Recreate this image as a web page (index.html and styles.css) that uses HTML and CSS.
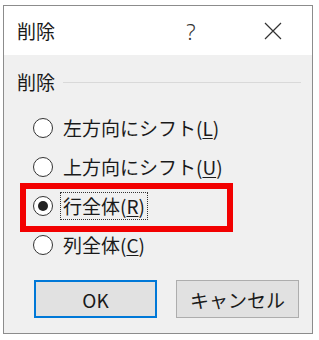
FILE: index.html
```html
<!DOCTYPE html>
<html lang="ja">
<head>
<meta charset="utf-8">
<link rel="stylesheet" href="styles.css">
</head>
<body>
<div class="dialog">
  <div class="titlebar">
    <span class="title">削除</span>
    <span class="help">?</span>
    <span class="close"><svg width="18" height="18" viewBox="0 0 18 18"><path d="M1 1 L17 17 M17 1 L1 17" stroke="#333" stroke-width="1.2" fill="none"/></svg></span>
  </div>
  <div class="content">
    <div class="group">
      <span class="group-label">削除</span>
      <span class="group-line"></span>
    </div>
    <div class="options">
      <div class="option"><span class="radio"></span><span class="label">左方向にシフト(<u>L</u>)</span></div>
      <div class="option"><span class="radio"></span><span class="label">上方向にシフト(<u>U</u>)</span></div>
      <div class="option"><span class="radio checked"></span><span class="label focus">行全体(<u>R</u>)</span></div>
      <div class="option"><span class="radio"></span><span class="label">列全体(<u>C</u>)</span></div>
      <div class="highlight"></div>
    </div>
    <div class="buttons">
      <button class="btn default">OK</button>
      <button class="btn">キャンセル</button>
    </div>
  </div>
</div>
</body>
</html>
```
FILE: styles.css
```css
* { box-sizing: border-box; }
html, body { margin: 0; padding: 0; background: #fff; }
body {
  font-family: "Noto Sans CJK JP", "Noto Sans", sans-serif;
  font-size: 19px;
  color: #1a1a1a;
  width: 319px;
  height: 340px;
  overflow: hidden;
}
.dialog {
  margin: 5px 0 0 3px;
  width: 310px;
  height: 329px;
  border: 1px solid #8c8c8c;
  display: flex;
  flex-direction: column;
}
.titlebar {
  height: 49px;
  background: #fff;
  display: flex;
  align-items: center;
  flex: none;
}
.title {
  padding-left: 13px;
  line-height: 24px;
  width: 176px;
}
.help {
  width: 22px;
  text-align: center;
  line-height: 24px;
  font-family: "Noto Sans", sans-serif;
  font-weight: 300;
  font-size: 22px;
  color: #333;
}
.close {
  margin-left: 62px;
  display: flex;
}
.content {
  flex: 1;
  background: #f0f0f0;
  padding: 15px 12px 0 13px;
}
.group {
  display: flex;
  align-items: center;
  height: 24px;
}
.group-label { line-height: 24px; }
.group-line {
  flex: 1;
  height: 1px;
  background: #d9d9d9;
  margin-left: 8px;
  margin-right: -1px;
}
.options {
  position: relative;
  margin-top: 14px;
  display: flex;
  flex-direction: column;
}
.option {
  height: 39px;
  display: flex;
  align-items: center;
  padding-left: 16px;
}
.radio {
  width: 20px;
  height: 20px;
  border: 1px solid #333;
  border-radius: 50%;
  background: #fff;
  display: flex;
  align-items: center;
  justify-content: center;
  flex: none;
}
.radio.checked::after {
  content: "";
  width: 10px;
  height: 10px;
  border-radius: 50%;
  background: #222;
}
.label {
  margin-left: 7px;
  line-height: 26px;
  padding: 0 2px;
  border: 1px dotted transparent;
}
.label.focus { border-color: #333; }
.label u { text-underline-offset: 2px; }
.highlight {
  position: absolute;
  left: 3px;
  top: 75px;
  width: 213px;
  height: 49px;
  border: 6px solid #f20000;
}
.buttons {
  display: flex;
  gap: 19px;
  margin-top: 16px;
  padding-left: 17px;
}
.btn {
  width: 123px;
  height: 38px;
  font-family: "Noto Sans CJK JP", "Noto Sans", sans-serif;
  font-size: 19px;
  color: #1a1a1a;
  background: #e1e1e1;
  border: 1px solid #adadad;
  padding: 0;
}
.btn.default {
  border: 2px solid #0078d7;
}
```
